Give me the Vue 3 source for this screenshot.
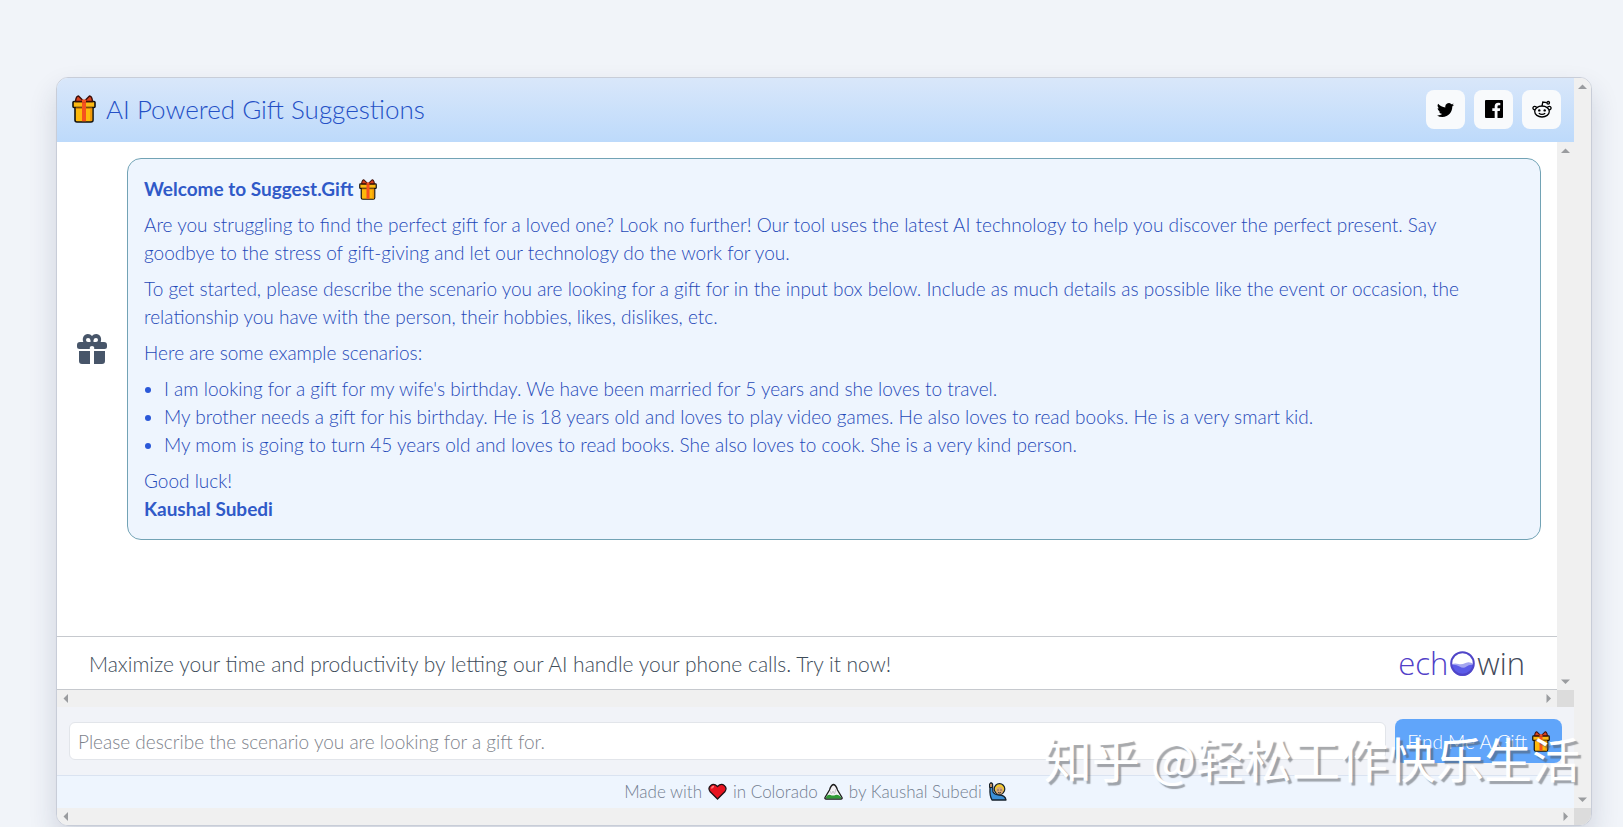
<script setup>
import { ref, h } from 'vue'

const prompt = ref('')

const examples = [
  "I am looking for a gift for my wife's birthday. We have been married for 5 years and she loves to travel.",
  'My brother needs a gift for his birthday. He is 18 years old and loves to play video games. He also loves to read books. He is a very smart kid.',
  'My mom is going to turn 45 years old and loves to read books. She also loves to cook. She is a very kind person.',
]

const GiftEmoji = () =>
  h('svg', { viewBox: '0 0 24 28', 'aria-hidden': 'true' }, [
    h('path', { d: 'M3 11v14q0 2 2 2h14q2 0 2-2V11z', fill: '#fdb90b', stroke: '#111', 'stroke-width': 1.6 }),
    h('path', { d: 'M18 12h2.200v14H18z', fill: '#f39a08' }),
    h('path', { d: 'M2 6.500h20q1 0 1 1v4q0 1-1 1H2q-1 0-1-1v-4q0-1 1-1z', fill: '#fcb913', stroke: '#111', 'stroke-width': 1.6 }),
    h('path', { d: 'M3.800 12.500h16.400v1.500H3.800z', fill: '#d98206' }),
    h('path', { d: 'M10 6h4v20.200h-4z', fill: '#f5511e' }),
    h('path', { d: 'M12 6.500 6.500 1Q4 1 3.500 6.500zM12 6.500 17.500 1Q20 1 20.500 6.500z', fill: '#d8431f', stroke: '#3a0d08', 'stroke-width': 1.4, 'stroke-linejoin': 'round' }),
    h('path', { d: 'M10 4.500h4v3h-4z', fill: '#f5511e' }),
  ])

const arrows = {
  up: 'M4 11h9L8.500 6.500z',
  down: 'M4 6.500h9L8.500 11z',
  left: 'M11 4v9L6.500 8.500z',
  right: 'M6.500 4v9L11 8.500z',
}
const Arrow = ({ dir }) =>
  h('svg', { viewBox: '0 0 17 17', width: 17, height: 17, 'aria-hidden': 'true' }, [
    h('path', { d: arrows[dir], fill: '#9a9c9f' }),
  ])
Arrow.props = ['dir']
</script>

<template>
  <div class="page">
    <main class="card">
      <div class="app">
        <header class="header">
          <h1 class="title"><GiftEmoji class="title-gift" />AI Powered Gift Suggestions</h1>
          <nav class="social">
            <a href="#" aria-label="Twitter">
              <svg viewBox="0 0 16 16" width="17" height="17"><path d="M5.026 15c6.038 0 9.341-5.003 9.341-9.334q.002-.211-.006-.422A6.700 6.700 0 0 0 16 3.542a6.700 6.700 0 0 1-1.889.518 3.300 3.300 0 0 0 1.447-1.817 6.500 6.500 0 0 1-2.087.793A3.286 3.286 0 0 0 7.875 6.030a9.320 9.320 0 0 1-6.767-3.429 3.290 3.290 0 0 0 1.018 4.382A3.300 3.300 0 0 1 .640 6.575v.045a3.290 3.290 0 0 0 2.632 3.218 3.200 3.200 0 0 1-.865.115 3 3 0 0 1-.614-.057 3.280 3.280 0 0 0 3.067 2.277A6.600 6.600 0 0 1 .780 13.580a6 6 0 0 1-.780-.045A9.340 9.340 0 0 0 5.026 15" /></svg>
            </a>
            <a href="#" aria-label="Facebook">
              <svg viewBox="0 0 18 18" width="18" height="18"><path d="M1 0h16q1 0 1 1v16q0 1-1 1h-4.500v-7h2.300l.4-2.700h-2.700V6.600q0-1.300 1.400-1.300h1.400V2.900q-1-.2-2.100-.2-3.500 0-3.500 3.600v2H7.300V11h2.400v7H1q-1 0-1-1V1q0-1 1-1z" /></svg>
            </a>
            <a href="#" aria-label="Reddit">
              <svg viewBox="0 0 20 18" width="20" height="18" fill="none" stroke="#000" stroke-width="1.300">
                <ellipse cx="10" cy="11.500" rx="7.300" ry="5.500" />
                <path d="M3 10Q.6 9.600 1 7.500q.8-2 3.700-.3M17 10q2.400-.4 2-2.500-.8-2-3.700-.3M10 6l.8-4 4 .7" />
                <circle cx="16.200" cy="2.800" r="1.300" />
                <circle cx="7.300" cy="10.400" r="1.200" fill="#000" stroke="none" />
                <circle cx="12.700" cy="10.400" r="1.200" fill="#000" stroke="none" />
                <path d="M6.800 13.300q3.200 2.200 6.400 0" />
              </svg>
            </a>
          </nav>
        </header>

        <section class="viewport">
          <div class="content">
            <div class="message">
              <svg class="avatar" viewBox="0 0 30 30" fill="#475569" aria-hidden="true">
                <path fill-rule="evenodd" d="M3 8h3.300C4.800 4 7 0 10.800 0 12.700 0 14 .8 15 2c1-1.200 2.300-2 4.200-2C23 0 25.200 4 23.700 8H27q3 0 3 3v1.500q0 2.500-2.500 2.500H17.200v-1.500q0-1.500-2.200-1.500t-2.200 1.500V15H2.500Q0 15 0 12.500V11q0-3 3-3zM11 4a2 2 0 1 0 0 4h2.500V6.200Q13.200 4 11 4zM19 4a2 2 0 1 1 0 4h-2.500V6.200Q16.800 4 19 4z" />
                <path d="M2 17h11v13H5q-3 0-3-3zM17 17h11v10q0 3-3 3h-8z" />
              </svg>
              <article class="bubble">
                <p><strong>Welcome to Suggest.Gift</strong> <GiftEmoji class="inline-gift" /></p>
                <p>Are you struggling to find the perfect gift for a loved one? Look no further! Our tool uses the latest AI technology to help you discover the perfect present. Say goodbye to the stress of gift-giving and let our technology do the work for you.</p>
                <p>To get started, please describe the scenario you are looking for a gift for in the input box below. Include as much details as possible like the event or occasion, the relationship you have with the person, their hobbies, likes, dislikes, etc.</p>
                <p>Here are some example scenarios:</p>
                <ul>
                  <li v-for="e in examples" :key="e">{{ e }}</li>
                </ul>
                <p>Good luck!<br /><strong>Kaushal Subedi</strong></p>
              </article>
            </div>
            <a class="banner" href="#">
              <span>Maximize your time and productivity by letting our AI handle your phone calls. Try it now!</span>
              <span class="logo">
                <span class="ech">ech</span>
                <svg viewBox="0 0 25 25" width="25" height="25" aria-hidden="true">
                  <circle cx="12.500" cy="12.500" r="11.500" fill="#fff" />
                  <path d="M1.500 13q4-1 7 0t7-1 8 1A11 11 0 0 1 1.500 13z" fill="#a5a6f0" />
                  <path d="M1.500 14q4-1 8 1.500t7 0 7-1.500A11 11 0 0 1 1.500 14z" fill="#5b5be8" />
                  <circle cx="12.500" cy="12.500" r="11.300" fill="none" stroke="#5046c8" stroke-width="2" />
                </svg>
                <span class="win">win</span>
              </span>
            </a>
          </div>
          <div class="bar vertical"><Arrow dir="up" /><Arrow dir="down" /></div>
          <div class="bar"><Arrow dir="left" /><Arrow dir="right" /></div>
          <div class="corner"></div>
        </section>

        <form class="form" @submit.prevent>
          <input v-model="prompt" type="text" aria-label="Gift scenario" placeholder="Please describe the scenario you are looking for a gift for." />
          <button type="submit">Find Me A Gift <GiftEmoji class="inline-gift" /></button>
        </form>

        <footer class="footer">
          <span>Made with</span>
          <svg viewBox="0 0 19 17" width="19" height="17" aria-hidden="true">
            <path d="M9.500 16 2 8.500C-1 4 4.500-1.500 9.500 3.500c5-5 10.500.5 7.500 5z" fill="#e8131f" stroke="#221014" stroke-width="1.300" />
            <path d="M3.500 5.500q.5-2 2.500-2" fill="none" stroke="#ff7d7d" stroke-width="1.300" />
          </svg>
          <span>in Colorado</span>
          <svg viewBox="0 0 19 17" width="19" height="17" aria-hidden="true">
            <path d="M9.500 1.500Q12 2 13.500 7L18 14.500q.5 1.500-1 1.500H2q-1.500 0-1-1.500L5.500 7Q7 2 9.500 1.500z" fill="#f4f2f5" stroke="#1a1a1a" stroke-width="1.300" />
            <path d="M6 8l1.500 3L9 8l1.500 3L12 6" fill="none" stroke="#c9c3cc" />
            <path d="M2 14q2-3 4.500-2t5 0 5.500 2v1.500H2z" fill="#2f9a35" />
          </svg>
          <span>by Kaushal Subedi</span>
          <svg viewBox="0 0 19 19" width="19" height="19" aria-hidden="true">
            <path d="M2 6V2q1-2 2.500 0L5 10q2 3 6 3 6 0 7 5H4q-2.500-4-2-12z" fill="#3b8fd6" stroke="#15202b" stroke-width="1.300" stroke-linejoin="round" />
            <path d="M1.500 5.500V2q1.500-2 3 0v3.500z" fill="#b98a5e" stroke="#15202b" />
            <circle cx="11.500" cy="7" r="5.300" fill="#f4c92e" stroke="#15202b" stroke-width="1.200" />
            <ellipse cx="11.500" cy="8.500" rx="3.500" ry="3.800" fill="#d9a878" />
            <path d="M10 7.500v1M13 7.500v1M10 10.500q1.500 1 3 0" stroke="#333" fill="none" />
          </svg>
        </footer>
      </div>
      <div class="bar vertical"><Arrow dir="up" /><Arrow dir="down" /></div>
      <div class="bar"><Arrow dir="left" /><Arrow dir="right" /></div>
      <div class="corner"></div>
    </main>
    <div class="watermark">知乎 @轻松工作快乐生活</div>
  </div>
</template>

<style>
body {
  margin: 0;
  background: #f1f4f9;
}
</style>

<style scoped>
* {
  box-sizing: border-box;
}
.page {
  position: relative;
  height: 100vh;
  padding: 77px 31px 1px 56px;
  overflow: hidden;
  background: #f1f4f9;
  font-family: Lato, "Open Sans", sans-serif;
  font-weight: 300;
}
.card {
  display: grid;
  grid-template: minmax(0, 1fr) 17px / minmax(0, 1fr) 17px;
  height: 100%;
  border: 1px solid #c8cdd8;
  border-radius: 12px;
  overflow: hidden;
  background: #fff;
  box-shadow: 0 14px 28px rgba(30, 41, 80, 0.16);
}
.app {
  display: flex;
  flex-direction: column;
  min-width: 0;
}
.bar {
  display: flex;
  justify-content: space-between;
  background: #f0f0f0;
}
.vertical {
  flex-direction: column;
}
.corner {
  background: #dcdcdc;
}
.header {
  display: flex;
  align-items: center;
  justify-content: space-between;
  height: 64px;
  padding: 0 13px 2px;
  background: linear-gradient(#d9e7fa, #bddafb);
}
.title {
  display: flex;
  align-items: center;
  gap: 10px;
  margin: 0;
  padding-left: 2px;
  color: #2450c6;
  font-size: 26px;
  font-weight: 300;
}
.title-gift {
  width: 24px;
  height: 28px;
}
.social {
  display: flex;
  gap: 9px;
}
.social a {
  display: grid;
  place-items: center;
  width: 39px;
  height: 39px;
  border-radius: 8px;
  background: #f8fafc;
}
.viewport {
  flex: 1;
  display: grid;
  grid-template: minmax(0, 1fr) 17px / minmax(0, 1fr) 17px;
  min-height: 0;
}
.content {
  display: flex;
  flex-direction: column;
  justify-content: space-between;
  min-width: 0;
}
.message {
  display: flex;
  align-items: center;
  gap: 20px;
  padding: 16px 16px 0 20px;
}
.avatar {
  flex: none;
  width: 30px;
  height: 30px;
}
.bubble {
  flex: 1;
  display: flex;
  flex-direction: column;
  gap: 8px;
  padding: 16px 40px 16px 16px;
  border: 1px solid #72a3b5;
  border-radius: 14px;
  background: #eef5fe;
  color: #1f49b8;
  font-size: 19px;
  line-height: 28px;
}
.bubble p,
.bubble ul {
  margin: 0;
}
.bubble ul {
  padding-left: 20px;
}
.bubble li::marker {
  color: #2a58d8;
}
.bubble strong {
  color: #305ac8;
  font-weight: 700;
}
.inline-gift {
  width: 18px;
  height: 21px;
  vertical-align: -4px;
}
.banner {
  display: flex;
  align-items: center;
  justify-content: space-between;
  height: 54px;
  padding: 0 32px;
  border-top: 1px solid #c6c9ce;
  border-bottom: 1px solid #c6c9ce;
  color: #3e4c59;
  font-size: 21px;
  text-decoration: none;
}
.logo {
  display: flex;
  align-items: center;
  gap: 2px;
  font-family: "Open Sans", sans-serif;
  font-size: 31px;
  line-height: 40px;
}
.ech {
  color: #5140c8;
}
.win {
  color: #434a5a;
}
.form {
  display: flex;
  align-items: center;
  gap: 9px;
  height: 68px;
  padding: 0 12px;
  background: #f1f3f8;
}
.form input {
  flex: 1;
  min-width: 0;
  height: 38px;
  padding: 0 8px;
  border: 1px solid #e2e5ea;
  border-radius: 6px;
  background: #fff;
  color: #374151;
  font: inherit;
  font-size: 19px;
}
.form input::placeholder {
  color: #7d828b;
}
.form button {
  display: flex;
  align-items: center;
  gap: 5px;
  height: 44px;
  padding: 0 12px;
  border: 0;
  border-radius: 8px;
  background: #60a5fa;
  color: #fff;
  font: inherit;
  font-size: 19px;
}
.footer {
  display: flex;
  align-items: center;
  justify-content: center;
  gap: 6px;
  height: 33px;
  padding-bottom: 2px;
  border-top: 1px solid #dae3f1;
  background: #eef5fe;
  color: #727d90;
  font-size: 17px;
}
.watermark {
  position: absolute;
  right: 43px;
  bottom: 40px;
  color: #fff;
  font-family: "Noto Sans CJK SC", sans-serif;
  font-size: 48px;
  font-weight: 400;
  line-height: 60px;
  text-shadow: 3px 3px 1px rgba(80, 84, 90, 0.5);
  white-space: nowrap;
  pointer-events: none;
}
</style>
